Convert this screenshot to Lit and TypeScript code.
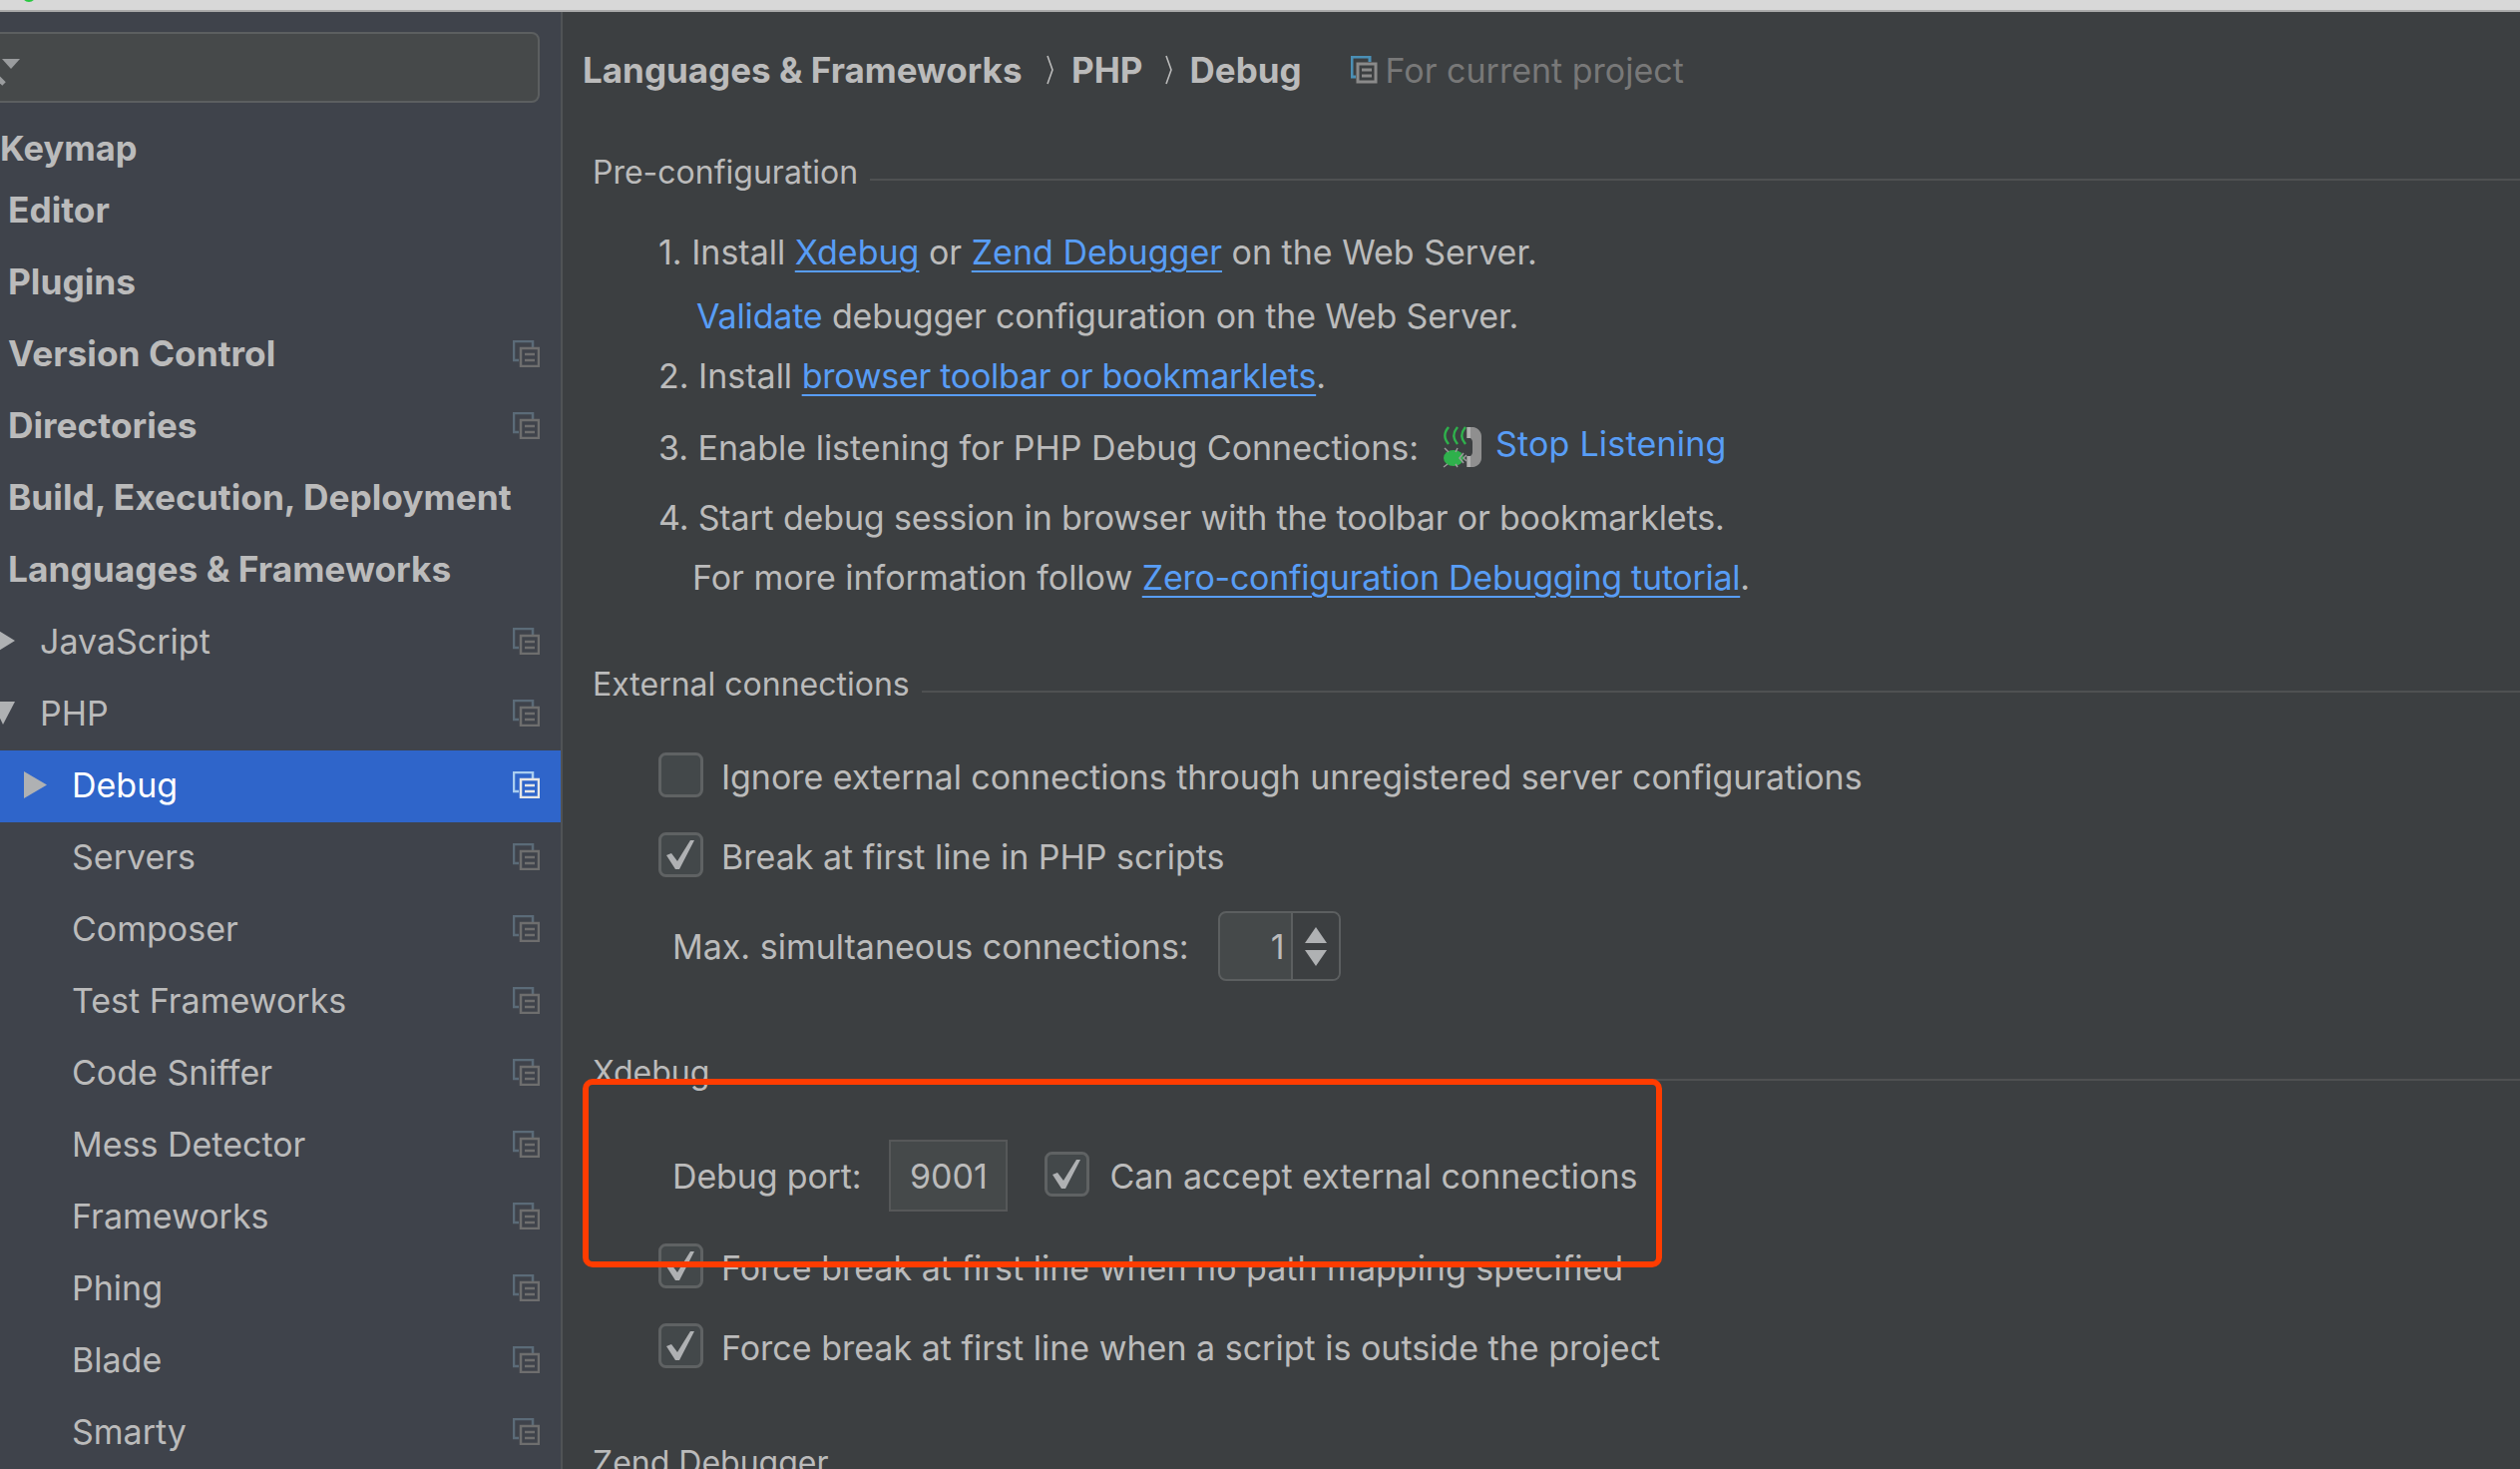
import { LitElement, html, css, svg } from "lit";
import { customElement } from "lit/decorators.js";

const copyIcon = (sel = false) => html`<svg class="copy" width="27" height="27" viewBox="0 0 27 27" fill="none">
  <path d="M6 20H1V1h19v6" stroke="${sel ? "#a9cdf0" : "#5b6b78"}" stroke-width="2.5"/>
  <rect x="8" y="8" width="18" height="18" stroke="${sel ? "#e6e6e6" : "#6e6e6e"}" stroke-width="2.5"/>
  <path d="M12 14h10M12 20h10" stroke="${sel ? "#e6e6e6" : "#6e6e6e"}" stroke-width="2.5"/>
</svg>`;

const arrowRight = html`<svg class="arr" width="23" height="27" viewBox="0 0 23 27"><path d="M0 0L23 13.5L0 27Z" fill="#afb1b3"/></svg>`;

const chevron = html`<svg class="chev" width="8" height="30" viewBox="0 0 8 30" fill="none"><path d="M1 1L6 15L1 29" stroke="#bbbbbb" stroke-width="1.6"/></svg>`;

const check = svg`<path d="M8 23L13 21L19 29L32 8H36L21 37H17Z" fill="#afb1b3"/>`;

const box = (on: boolean) => html`<svg class="cb" width="45" height="45" viewBox="0 0 45 45">
  <rect x="1.5" y="1.5" width="42" height="42" rx="6" fill="#43484a" stroke="#5f6263" stroke-width="3"/>
  ${on ? check : ""}
</svg>`;

const phone = html`<svg class="phone" width="40" height="42" viewBox="0 0 40 42" fill="none">
  <g stroke="#2fb14c" stroke-width="2.6">
    <path d="M6 1C1 7 1 12 6 18"/><path d="M15 1C10 7 10 12 15 18"/><path d="M23 1C18 7 18 12 23 18"/>
  </g>
  <ellipse cx="11" cy="32" rx="10" ry="8" fill="#2fb14c"/>
  <g stroke="#9a9a9a" stroke-width="1.5">
    <path d="M2 22L6 26M15 22L13 26M1 41L5 38M15 41L13 38"/>
    <path d="M21 27L17 32L21 37"/>
    <path d="M24 29L21 32L24 35"/>
  </g>
  <path d="M24 1H31C36 2 39 6 39 10V32C39 36 36 40 31 41H24V30H28C30 28 30 27 30 25V17C30 15 30 14 28 12H24Z" fill="#8f8f8f"/>
  <path d="M25 1H28V12H25ZM25 30H28V41H25Z" fill="#b0b0b0"/>
</svg>`;

const topItems = [
  { t: "Editor", icon: false },
  { t: "Plugins", icon: false },
  { t: "Version Control", icon: true },
  { t: "Directories", icon: true },
  { t: "Build, Execution, Deployment", icon: false },
  { t: "Languages & Frameworks", icon: false },
];
const subItems = ["Servers", "Composer", "Test Frameworks", "Code Sniffer", "Mess Detector", "Frameworks", "Phing", "Blade", "Smarty"];

@customElement("app-root")
export class AppRoot extends LitElement {
  static styles = css`
    :host { display: block; width: 2526px; height: 1472px; overflow: hidden; position: relative;
      font-family: Inter, "Liberation Sans", sans-serif; font-size: 34px; color: #bbbbbb; background: #3c3f41; }
    * { box-sizing: border-box; }
    .titlebar { height: 12px; background: #d8d8d8; border-bottom: 2px solid #a8a8a8; position: relative; overflow: hidden; }
    .dot { position: absolute; left: 22px; top: -12px; width: 14px; height: 14px; border-radius: 50%; background: #28c840; }
    .body { display: flex; height: 1460px; }
    .side { width: 564px; flex: none; background: #3f434b; border-right: 2px solid #505355; overflow: hidden; }
    .search { height: 71px; margin: 20px 21px 0 -20px; background: #46494a; border: 2px solid #5c5f60; border-radius: 8px; position: relative; }
    .search svg { position: absolute; left: -2px; top: 18px; }
    .row { height: 72px; display: flex; align-items: center; padding-right: 21px; padding-bottom: 4px; white-space: nowrap; }
    .row .label { flex: 1; }
    .row.top { padding-left: 8px; font-weight: 700; font-size: 35.3px; }
    .keymap { height: 48px; margin-top: 21px; margin-bottom: 4px; padding-left: 0; font-weight: 700; font-size: 34.5px; display: flex; align-items: center; }
    .row.l1 { padding-left: 0; }
    .row.l1 .label { margin-left: 40px; }
    .row.l1 .tri { width: 15px; height: 24px; flex: none; margin-right: -15px; overflow: visible; }
    .row.l2 { padding-left: 72px; }
    .row.sel { background: #2f65ca; color: #ffffff; padding-left: 24px; }
    .row.sel .label { margin-left: 25px; }
    .main { flex: 1; min-width: 0; overflow: hidden; padding-top: 35px; }
    .line { height: 46px; display: flex; align-items: center; white-space: nowrap; }
    .crumb { padding-left: 20px; font-weight: 700; font-size: 35px; }
    .crumb .chev { margin: 0 17px 0 22px; }
    .crumb > svg:first-of-type { margin-left: 24.5px; }
    .crumb .scope { display: flex; align-items: center; margin-left: 49px; font-weight: 400; font-size: 34px; color: #787878; gap: 8px; }
    .sec { padding-left: 30px; font-size: 32px; }
    .sec .hr { flex: 1; height: 2px; background: #4f5152; margin: 16px 0 0 12px; }
    .g14 { margin-top: 14px; } .g18 { margin-top: 18px; } .g24 { margin-top: 24px; } .g26 { margin-top: 26px; }
    .g34 { margin-top: 34px; } .g44 { margin-top: 44px; } .g47 { margin-top: 47px; } .g46 { margin-top: 46px; }
    .g56 { margin-top: 56px; } .g58 { margin-top: 58px; } .g61 { margin-top: 61px; } .g69 { margin-top: 69px; } .g80 { margin-top: 80px; }
    .p1 { padding-left: 96px; }
    .p1b { padding-left: 134px; }
    .p1c { padding-left: 130px; }
    .p2 { padding-left: 110px; }
    a { color: #589df6; text-decoration: underline; text-decoration-thickness: 2px; text-underline-offset: 6px; }
    a.plain { text-decoration: none; }
    a.tight { letter-spacing: -0.27px; }
    .t1 { letter-spacing: -0.16px; }
    .t0 { letter-spacing: -0.06px; }
    .pre { white-space: pre; }
    .phone { margin: 0 13px 0 24px; flex: none; }
    .stop { margin-bottom: 8px; display: flex; align-items: center; letter-spacing: 0.2px; }
    .check { padding-left: 96px; gap: 18px; }
    .cb { margin-bottom: 3px; flex: none; }
    .spin { width: 123px; height: 70px; margin-left: 29px; border: 2px solid #5c5f60; border-radius: 8px; display: flex; flex: none; background: #45494a; }
    .spin .val { width: 73px; border-right: 2px solid #5c5f60; display: flex; align-items: center; justify-content: flex-end; padding-right: 6px; }
    .spin .btns { flex: 1; display: flex; flex-direction: column; align-items: center; justify-content: center; gap: 7px; background: #3c3f41; border-radius: 0 6px 6px 0; }
    .port { width: 119px; height: 72px; margin: 0 37px 0 28px; border: 2px solid #565859; background: #45494a; display: flex; align-items: center; justify-content: center; flex: none; }
    .port + svg { margin-right: 20px; }
    .ann { position: absolute; left: 584px; top: 1081px; width: 1082px; height: 189px; border: 6px solid #ff3c00; border-radius: 10px; pointer-events: none; }
  `;

  render() {
    return html`
      <div class="titlebar"><span class="dot"></span></div>
      <div class="body">
        <aside class="side">
          <div class="search"><svg width="44" height="36" viewBox="0 0 44 36"><path d="M22 7H40L31 17Z" fill="#9a9c9e"/><path d="M12 20L24 32" stroke="#9a9c9e" stroke-width="5"/></svg></div>
          <div class="keymap">Keymap</div>
          ${topItems.map((i) => html`<div class="row top"><span class="label">${i.t}</span>${i.icon ? copyIcon() : ""}</div>`)}
          <div class="row l1">
            <svg class="tri" viewBox="0 0 15 24"><path d="M-8 -2L15 12L-8 26Z" fill="#afb1b3"/></svg>
            <span class="label">JavaScript</span>${copyIcon()}
          </div>
          <div class="row l1">
            <svg class="tri" viewBox="0 0 15 24"><path d="M-8 1H15L3 24Z" fill="#afb1b3"/></svg>
            <span class="label">PHP</span>${copyIcon()}
          </div>
          <div class="row sel">${arrowRight}<span class="label">Debug</span>${copyIcon(true)}</div>
          ${subItems.map((t) => html`<div class="row l2"><span class="label">${t}</span>${copyIcon()}</div>`)}
        </aside>
        <main class="main">
          <div class="line crumb">
            <span>Languages &amp; Frameworks</span>${chevron}<span>PHP</span>${chevron}<span>Debug</span>
            <span class="scope">
              <svg width="27" height="28" viewBox="0 0 27 28" fill="none">
                <path d="M5 21H1V1h18v5" stroke="#4a8fb5" stroke-width="3"/>
                <rect x="7" y="8" width="18" height="18" fill="#3c3f41" stroke="#8a8a8a" stroke-width="3"/>
                <path d="M11 14h10M11 20h10" stroke="#8a8a8a" stroke-width="3"/>
              </svg>
              For current project
            </span>
          </div>
          <div class="line sec g56"><span>Pre-configuration</span><span class="hr"></span></div>
          <div class="line p1 g34"><span class="pre">1. Install <a href="#">Xdebug</a> or <a href="#">Zend Debugger</a> on the Web Server.</span></div>
          <div class="line p1b g18"><span class="pre t1"><a class="plain" href="#">Validate</a> debugger configuration on the Web Server.</span></div>
          <div class="line p1 g14"><span class="pre">2. Install <a class="tight" href="#">browser toolbar or bookmarklets</a>.</span></div>
          <div class="line p1 g26"><span>3. Enable listening for PHP Debug Connections:</span>${phone}<a class="plain stop" href="#">Stop Listening</a></div>
          <div class="line p1 g24"><span class="t1">4. Start debug session in browser with the toolbar or bookmarklets.</span></div>
          <div class="line p1c g14"><span class="pre">For more information follow <a class="tight" href="#">Zero-configuration Debugging tutorial</a>.</span></div>
          <div class="line sec g61"><span>External connections</span><span class="hr"></span></div>
          <div class="line check g47">${box(false)}<span class="t0">Ignore external connections through unregistered server configurations</span></div>
          <div class="line check g34">${box(true)}<span>Break at first line in PHP scripts</span></div>
          <div class="line p2 g44">
            <span>Max. simultaneous connections:</span>
            <div class="spin">
              <div class="val">1</div>
              <div class="btns">
                <svg width="22" height="16" viewBox="0 0 22 16"><path d="M11 0L22 16H0Z" fill="#afb1b3"/></svg>
                <svg width="22" height="16" viewBox="0 0 22 16"><path d="M0 0H22L11 16Z" fill="#afb1b3"/></svg>
              </div>
            </div>
          </div>
          <div class="line sec g80"><span>Xdebug</span><span class="hr"></span></div>
          <div class="line p2 g58"><span class="t1">Debug port:</span><div class="port">9001</div>${box(true)}<span>Can accept external connections</span></div>
          <div class="line check g46">${box(true)}<span>Force break at first line when no path mapping specified</span></div>
          <div class="line check g34">${box(true)}<span>Force break at first line when a script is outside the project</span></div>
          <div class="line sec g69"><span>Zend Debugger</span><span class="hr"></span></div>
        </main>
      </div>
      <div class="ann"></div>
    `;
  }
}
